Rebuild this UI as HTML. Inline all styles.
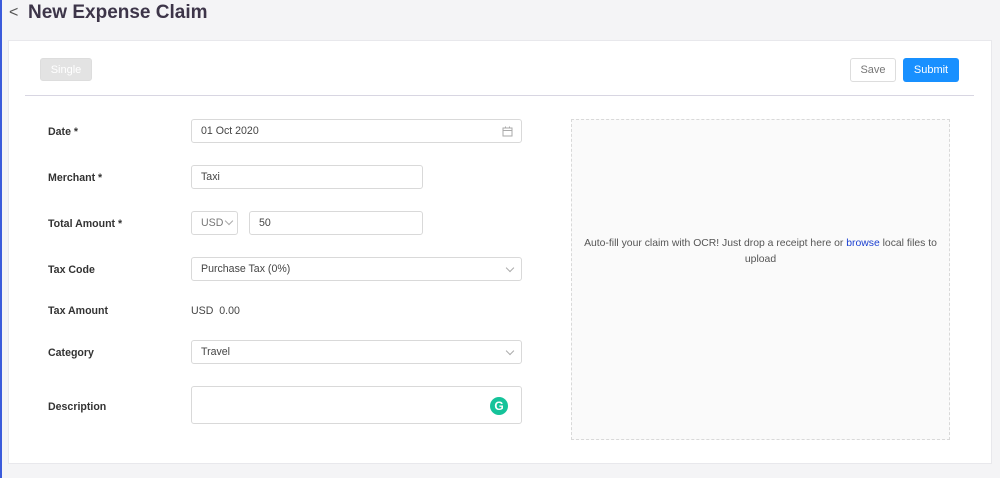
<!DOCTYPE html>
<html><head><style>
*{box-sizing:border-box;margin:0;padding:0}
body{width:1000px;height:478px;background:#f4f4f6;font-family:"Liberation Sans",sans-serif;position:relative;overflow:hidden;color:#333}
.edge{position:absolute;left:0;top:0;width:2px;height:478px;background:#3b5bdb}
h1{position:absolute;left:28px;top:2px;font-size:19px;font-weight:bold;color:#3d3549}
.back{position:absolute;left:9px;top:4px;font-size:16px;color:#555}
.card{position:absolute;left:8px;top:40px;width:984px;height:424px;background:#fff;border:1px solid #e8e8ec}
.abs{position:absolute}
.btn{position:absolute;font-size:11px;text-align:center;border-radius:3px}
.lbl{position:absolute;left:48px;font-size:10.6px;font-weight:bold;color:#333}
.in{position:absolute;border:1px solid #d9d9d9;border-radius:3px;font-size:10.6px;color:#444;padding-left:9px;display:flex;align-items:center}
.chev{position:absolute;right:8px;top:7px;width:6px;height:6px;border-right:1px solid #aaa;border-bottom:1px solid #aaa;transform:rotate(45deg)}
</style></head><body>
<div class="edge"></div>
<div class="back">&lt;</div>
<h1>New Expense Claim</h1>
<div class="card"></div>
<div class="btn" style="left:40px;top:58px;width:52px;height:23px;line-height:23px;background:#e3e3e3;color:#fff;border:1px solid #ddd">Single</div>
<div class="btn" style="left:850px;top:58px;width:46px;height:24px;line-height:22px;border:1px solid #ddd;color:#777">Save</div>
<div class="btn" style="left:903px;top:58px;width:56px;height:24px;line-height:24px;background:#1890ff;color:#fff">Submit</div>
<div class="abs" style="left:25px;top:95px;width:949px;height:1px;background:#d8d6e2"></div>

<div class="lbl" style="top:126px">Date *</div>
<div class="in" style="left:191px;top:119px;width:331px;height:24px">01 Oct 2020
<svg style="position:absolute;right:8px;top:6px" width="11" height="11" viewBox="0 0 11 11"><rect x="1" y="2" width="9" height="8" fill="none" stroke="#aaa"/><line x1="1" y1="4.5" x2="10" y2="4.5" stroke="#aaa"/><line x1="3.5" y1="0.5" x2="3.5" y2="2.5" stroke="#aaa"/><line x1="7.5" y1="0.5" x2="7.5" y2="2.5" stroke="#aaa"/></svg></div>

<div class="lbl" style="top:172px">Merchant *</div>
<div class="in" style="left:191px;top:165px;width:232px;height:24px">Taxi</div>

<div class="lbl" style="top:218px">Total Amount *</div>
<div class="in" style="left:191px;top:211px;width:47px;height:24px;color:#777">USD<span style="display:inline-block;width:6px;height:6px;border-right:1px solid #aaa;border-bottom:1px solid #aaa;transform:rotate(45deg);margin:-4px 0 0 3px"></span></div>
<div class="in" style="left:249px;top:211px;width:174px;height:24px">50</div>

<div class="lbl" style="top:264px">Tax Code</div>
<div class="in" style="left:191px;top:257px;width:331px;height:24px">Purchase Tax (0%)<span class="chev"></span></div>

<div class="lbl" style="top:305px">Tax Amount</div>
<div class="abs" style="left:191px;top:305px;font-size:10.6px;color:#444">USD&nbsp;&nbsp;0.00</div>

<div class="lbl" style="top:347px">Category</div>
<div class="in" style="left:191px;top:340px;width:331px;height:24px">Travel<span class="chev"></span></div>

<div class="lbl" style="top:401px">Description</div>
<div class="in" style="left:191px;top:386px;width:331px;height:38px"></div>
<div class="abs" style="left:490px;top:397px;width:18px;height:18px;border-radius:50%;background:#15c39a;color:#fff;font-size:12px;font-weight:bold;text-align:center;line-height:18px">G</div>

<div class="abs" style="left:571px;top:119px;width:379px;height:321px;border:1px dashed #d9d9d9;background:#fafafa;font-size:10.4px;color:#555;text-align:center;padding:116px 8px 0;line-height:16px">Auto-fill your claim with OCR! Just drop a receipt here or <span style="color:#1a3fd1">browse</span> local files to upload</div>
</body></html>
